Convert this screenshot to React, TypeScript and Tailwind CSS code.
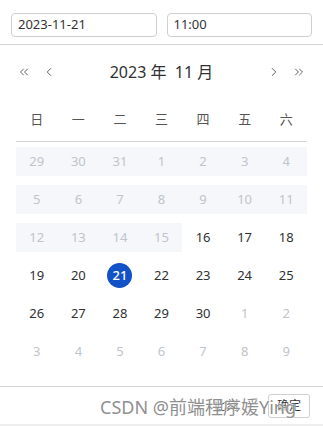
import { ChevronLeft, ChevronRight, ChevronsLeft, ChevronsRight } from "lucide-react";

const WEEK = ["日", "一", "二", "三", "四", "五", "六"];

type Day = { n: number; kind: "disabled" | "normal" | "muted" | "selected" };

function buildDays(): Day[] {
  const days: Day[] = [];
  [29, 30, 31].forEach((n) => days.push({ n, kind: "disabled" }));
  for (let n = 1; n <= 30; n++) {
    if (n < 16) days.push({ n, kind: "disabled" });
    else if (n === 21) days.push({ n, kind: "selected" });
    else days.push({ n, kind: "normal" });
  }
  for (let n = 1; n <= 9; n++) days.push({ n, kind: "muted" });
  return days;
}

export default function App() {
  const days = buildDays();
  return (
    <div
      className="relative w-[323px] h-[427px] overflow-hidden bg-white text-[#303133]"
      style={{ fontFamily: '"Noto Sans", "Noto Sans CJK SC", sans-serif' }}
    >
      {/* Inputs */}
      <div className="flex gap-[10px] px-[11px] pt-[13px] pb-[7px] border-b border-[#d4d4d4]">
        <div className="w-[146px] h-[24px] border border-[#cfcfcf] rounded-[4px] px-[6px] flex items-center text-[13px] text-[#333]">
          2023-11-21
        </div>
        <div className="w-[146px] h-[24px] border border-[#cfcfcf] rounded-[4px] px-[6px] flex items-center text-[13px] text-[#333]">
          11:00
        </div>
      </div>

      {/* Header */}
      <div className="h-[53px] flex items-center px-[17px] text-[#555]">
        <ChevronsLeft size={14} strokeWidth={1.6} />
        <ChevronLeft size={14} strokeWidth={1.6} className="ml-[11px]" />
        <div className="flex-1 text-center text-[16px] text-[#303133]">2023 年&nbsp; 11 月</div>
        <ChevronRight size={14} strokeWidth={1.6} />
        <ChevronsRight size={14} strokeWidth={1.6} className="ml-[11px]" />
      </div>

      {/* Weekdays */}
      <div className="mx-[16px] grid grid-cols-7 h-[44px] items-center border-b border-[#d4d4d4] text-[13px] text-[#555]">
        {WEEK.map((w) => (
          <div key={w} className="text-center">
            {w}
          </div>
        ))}
      </div>

      {/* Days */}
      <div className="mx-[16px] mt-[5px] grid grid-cols-7 gap-y-[9px] text-[13px]">
        {days.map((d, i) => (
          <div
            key={i}
            className={
              "h-[29px] flex items-center justify-center " +
              (d.kind === "disabled" ? "bg-[#f5f7fa] text-[#c0c4cc]" : "")
            }
          >
            {d.kind === "selected" ? (
              <span className="w-[25px] h-[25px] rounded-full bg-[#1352c6] text-white font-medium flex items-center justify-center">
                {d.n}
              </span>
            ) : (
              <span className={d.kind === "muted" ? "text-[#c0c4cc]" : d.kind === "normal" ? "text-[#303133]" : ""}>
                {d.n}
              </span>
            )}
          </div>
        ))}
      </div>

      {/* Footer */}
      <div className="mt-[20px] border-t border-[#d4d4d4] h-[38px] flex items-center justify-end pr-[13px] gap-[30px] text-[12px]">
        <span className="text-[#333]">此刻</span>
        <span className="h-[24px] px-[8px] border border-[#cfcfcf] rounded-[3px] flex items-center text-[#333]">确定</span>
      </div>
      <div className="h-[2px] bg-[#eeeeee]" />

      {/* Watermark */}
      <div
        className="absolute left-[100px] top-[396px] text-[18px] leading-[22px] text-[#909090] whitespace-nowrap"
        style={{ textShadow: "0 0 2px #fff, 0 0 2px #fff" }}
      >
        CSDN @前端程序媛Ying
      </div>
    </div>
  );
}
